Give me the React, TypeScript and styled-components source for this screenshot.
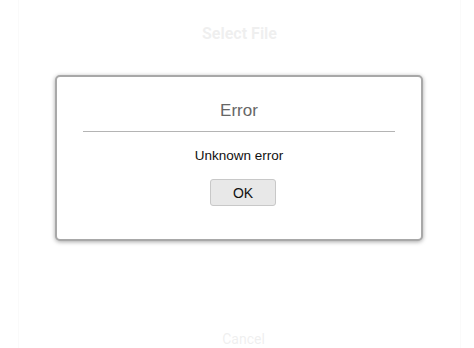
import React from "react";
import styled, { createGlobalStyle } from "styled-components";

const Global = createGlobalStyle`
  html, body { margin: 0; padding: 0; background: #ffffff; }
  body { font-family: "Liberation Sans", Arial, sans-serif; overflow: hidden; }
`;

const Page = styled.div`
  width: 474px;
  height: 348px;
  padding: 0 13px 0 18px;
  box-sizing: border-box;
  position: relative;
  overflow: hidden;
`;

const Panel = styled.div`
  height: 348px;
  border-left: 1px solid #b8b8b8;
  border-right: 1px solid #b8b8b8;
  background: #f8f8f8;
  display: flex;
  flex-direction: column;
  align-items: center;
  justify-content: space-between;
  padding: 24px 0 0;
  box-sizing: border-box;
`;

const PanelTitle = styled.div`
  font-family: Roboto, "Liberation Sans", sans-serif;
  font-weight: 700;
  font-size: 16px;
  line-height: 19px;
  color: #222;
`;

const CancelButton = styled.div`
  font-family: Roboto, "Liberation Sans", sans-serif;
  font-size: 14px;
  line-height: 16px;
  color: #222;
  margin-left: 8px;
  margin-bottom: 1px;
`;

const Overlay = styled.div`
  position: absolute;
  inset: 0;
  background: rgba(255, 255, 255, 0.93);
  display: flex;
  justify-content: center;
  align-items: flex-start;
  padding: 75px 0 0 4px;
  box-sizing: border-box;
`;

const Modal = styled.div`
  width: 368px;
  height: 166px;
  box-sizing: border-box;
  background: #fff;
  border: 2px solid #a8a8a8;
  border-radius: 5px;
  box-shadow: 0 1px 4px rgba(0, 0, 0, 0.35);
  padding: 24px 26px 0;
  display: flex;
  flex-direction: column;
  align-items: center;
`;

const Title = styled.div`
  font-size: 17px;
  line-height: 20px;
  color: #666;
  margin-bottom: 10px;
`;

const Divider = styled.div`
  align-self: stretch;
  height: 1px;
  background: #b4b4b4;
  margin-bottom: 15px;
`;

const Message = styled.div`
  font-size: 13.5px;
  line-height: 17px;
  color: #111;
  margin-bottom: 15px;
`;

const OkButton = styled.button`
  width: 66px;
  height: 27px;
  margin-left: 8px;
  box-sizing: border-box;
  background: #e8e8e8;
  border: 1px solid #c8c8c8;
  border-radius: 3px;
  font-family: "Liberation Sans", Arial, sans-serif;
  font-size: 14px;
  color: #111;
  padding: 0;
`;

export default function App() {
  return (
    <>
      <Global />
      <Page>
        <Panel>
          <PanelTitle>Select File</PanelTitle>
          <CancelButton>Cancel</CancelButton>
        </Panel>
        <Overlay>
          <Modal>
            <Title>Error</Title>
            <Divider />
            <Message>Unknown error</Message>
            <OkButton>OK</OkButton>
          </Modal>
        </Overlay>
      </Page>
    </>
  );
}
